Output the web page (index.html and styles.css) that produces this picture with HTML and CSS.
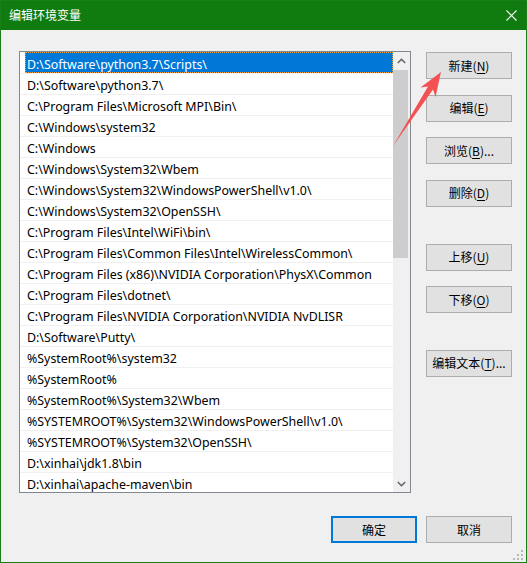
FILE: index.html
```html
<!DOCTYPE html>
<html lang="zh-CN">
<head>
<meta charset="utf-8">
<title>编辑环境变量</title>
<link rel="stylesheet" href="styles.css">
</head>
<body>
<div class="window">
  <div class="titlebar">
    <span class="title">编辑环境变量</span>
    <svg class="close" width="11" height="11" viewBox="0 0 11 11">
      <path d="M0.5 0.5 L10.5 10.5 M10.5 0.5 L0.5 10.5" stroke="#fff" stroke-width="1.1" fill="none"/>
    </svg>
  </div>

  <div class="content">
    <div class="main">
      <div class="listbox">
        <ul class="items">
          <li class="item selected"><span class="cell">D:\Software\python3.7\Scripts\</span></li>
          <li class="item"><span class="cell">D:\Software\python3.7\</span></li>
          <li class="item"><span class="cell">C:\Program Files\Microsoft MPI\Bin\</span></li>
          <li class="item"><span class="cell">C:\Windows\system32</span></li>
          <li class="item"><span class="cell">C:\Windows</span></li>
          <li class="item"><span class="cell">C:\Windows\System32\Wbem</span></li>
          <li class="item"><span class="cell">C:\Windows\System32\WindowsPowerShell\v1.0\</span></li>
          <li class="item"><span class="cell">C:\Windows\System32\OpenSSH\</span></li>
          <li class="item"><span class="cell">C:\Program Files\Intel\WiFi\bin\</span></li>
          <li class="item"><span class="cell">C:\Program Files\Common Files\Intel\WirelessCommon\</span></li>
          <li class="item"><span class="cell">C:\Program Files (x86)\NVIDIA Corporation\PhysX\Common</span></li>
          <li class="item"><span class="cell">C:\Program Files\dotnet\</span></li>
          <li class="item"><span class="cell">C:\Program Files\NVIDIA Corporation\NVIDIA NvDLISR</span></li>
          <li class="item"><span class="cell">D:\Software\Putty\</span></li>
          <li class="item"><span class="cell">%SystemRoot%\system32</span></li>
          <li class="item"><span class="cell">%SystemRoot%</span></li>
          <li class="item"><span class="cell">%SystemRoot%\System32\Wbem</span></li>
          <li class="item"><span class="cell">%SYSTEMROOT%\System32\WindowsPowerShell\v1.0\</span></li>
          <li class="item"><span class="cell">%SYSTEMROOT%\System32\OpenSSH\</span></li>
          <li class="item"><span class="cell">D:\xinhai\jdk1.8\bin</span></li>
          <li class="item"><span class="cell">D:\xinhai\apache-maven\bin</span></li>
        </ul>
        <div class="scrollbar">
          <div class="sb-btn">
            <svg width="9" height="6" viewBox="0 0 9 6"><path d="M0.8 5 L4.5 1.3 L8.2 5" stroke="#606060" stroke-width="1.5" fill="none"/></svg>
          </div>
          <div class="sb-track"><div class="sb-thumb"></div></div>
          <div class="sb-btn">
            <svg width="9" height="6" viewBox="0 0 9 6"><path d="M0.8 1 L4.5 4.7 L8.2 1" stroke="#606060" stroke-width="1.5" fill="none"/></svg>
          </div>
        </div>
      </div>

      <div class="actions">
        <button class="btn">新建(<u>N</u>)</button>
        <button class="btn">编辑(<u>E</u>)</button>
        <button class="btn">浏览(<u>B</u>)...</button>
        <button class="btn">删除(<u>D</u>)</button>
        <button class="btn group">上移(<u>U</u>)</button>
        <button class="btn">下移(<u>O</u>)</button>
        <button class="btn group">编辑文本(<u>T</u>)...</button>
      </div>
    </div>

    <div class="footer">
      <button class="btn default">确定</button>
      <button class="btn">取消</button>
    </div>

    <svg class="grip" width="11" height="11" viewBox="0 0 11 11">
      <g fill="#b8b8b8">
        <rect x="8" y="0" width="2" height="2"/>
        <rect x="4" y="4" width="2" height="2"/>
        <rect x="8" y="4" width="2" height="2"/>
        <rect x="0" y="8" width="2" height="2"/>
        <rect x="4" y="8" width="2" height="2"/>
        <rect x="8" y="8" width="2" height="2"/>
      </g>
    </svg>
  </div>

  <!-- annotation arrow pointing at the 新建 button -->
  <svg class="pointer" width="527" height="563" viewBox="0 0 527 563">
    <polygon points="441,72 420.5,87.5 428,86.5 393,146 433,89.5 435.5,97" fill="#f45252"/>
  </svg>
</div>
</body>
</html>
```

FILE: styles.css
```css
* {
  box-sizing: border-box;
}

html, body {
  margin: 0;
  padding: 0;
  background: #f0f0f0;
}

body {
  font-family: "Noto Sans", "Noto Sans CJK SC", sans-serif;
  font-size: 12px;
  color: #000;
}

.window {
  position: relative;
  width: 527px;
  height: 563px;
  border: 1px solid #1a7f1a;
  background: #f0f0f0;
  overflow: hidden;
}

/* title bar */
.titlebar {
  height: 30px;
  margin: -1px -1px 0;
  padding: 0 10px 0 9px;
  background: #107c10;
  display: flex;
  align-items: center;
  justify-content: space-between;
}

.title {
  color: #fff;
  font-family: "Noto Sans CJK SC", sans-serif;
  font-size: 12px;
  line-height: 16px;
}

.close {
  display: block;
}

/* dialog body */
.content {
  position: relative;
  height: 532px;
  padding: 21px 14px 0 18px;
}

.main {
  display: flex;
  gap: 15px;
}

.listbox {
  width: 392px;
  height: 442px;
  border: 1px solid #828790;
  background: #fff;
  display: flex;
  overflow: hidden;
}

.items {
  list-style: none;
  margin: 0;
  padding: 1px 0 0;
  width: 373px;
  overflow: hidden;
  font-size: 12.4px;
}

.item {
  height: 21px;
  border-bottom: 1px solid #f0f0f0;
  display: flex;
}

/* taller line box than the row keeps the text slightly below centre */
.cell {
  display: block;
  margin-left: 5px;
  padding-left: 2px;
  flex: 1;
  height: 20px;
  line-height: 24px;
  white-space: nowrap;
  overflow: hidden;
}

.item.selected .cell {
  margin-top: -1px;
  height: 21px;
  line-height: 25px;
  background: #0078d7;
  color: #fff;
  outline: 1px dotted #f2a03c;
  outline-offset: -1px;
}

.scrollbar {
  width: 17px;
  background: #f0f0f0;
  display: flex;
  flex-direction: column;
}

.sb-btn {
  height: 17px;
  display: flex;
  align-items: center;
  justify-content: center;
}

.sb-btn svg {
  display: block;
}

.sb-track {
  flex: 1;
  padding: 1px 2px 0 0;
}

.sb-thumb {
  height: 188px;
  background: #cdcdcd;
}

/* buttons */
.btn {
  width: 86px;
  height: 27px;
  padding: 0;
  border: 1px solid #adadad;
  background: #e1e1e1;
  font-family: "Noto Sans CJK SC", sans-serif;
  font-size: 12px;
  color: #000;
  line-height: 16px;
}

.btn u {
  text-decoration-thickness: 1px;
  text-underline-offset: 2px;
}

.actions {
  display: flex;
  flex-direction: column;
  gap: 15.67px;
  padding-top: 1px;
}

.actions .btn.group {
  margin-top: 21px;
}

.footer {
  display: flex;
  justify-content: flex-end;
  gap: 9px;
  margin-top: 23px;
}

.btn.default {
  border: 2px solid #0078d7;
}

.grip {
  position: absolute;
  right: 2px;
  bottom: 1px;
}

.pointer {
  position: absolute;
  left: -1px;
  top: -1px;
  pointer-events: none;
}
```
